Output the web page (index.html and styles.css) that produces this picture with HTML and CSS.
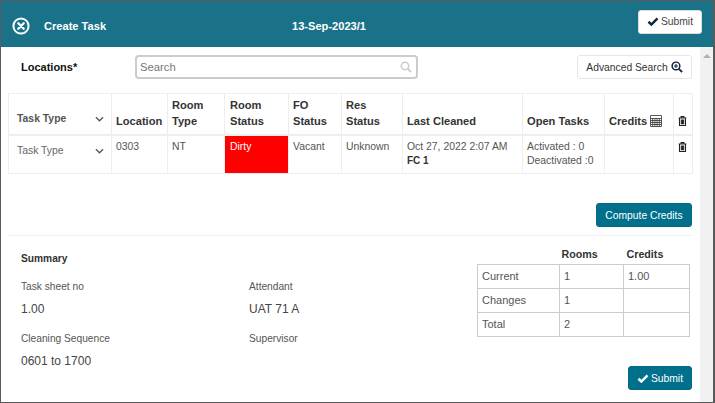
FILE: index.html
```html
<!DOCTYPE html>
<html lang="en">
<head>
<meta charset="utf-8">
<title>Create Task</title>
<link rel="stylesheet" href="styles.css">
</head>
<body>
<div class="window">
  <header class="topbar">
    <div class="title-group">
      <svg class="close-icon" viewBox="0 0 18 18" width="18" height="18"><circle cx="9" cy="9" r="7.6" fill="none" stroke="#fff" stroke-width="2"/><path d="M6.3 6.3l5.4 5.4M11.7 6.3l-5.4 5.4" stroke="#fff" stroke-width="2.3" stroke-linecap="round"/></svg>
      <span class="title">Create Task</span>
    </div>
    <div class="date">13-Sep-2023/1</div>
    <button class="btn btn-light"><svg class="check" viewBox="0 0 14 11" width="12" height="9"><path d="M1.5 5.8l3.5 3.4 7.5-7.6" fill="none" stroke="#0f2440" stroke-width="3"/></svg>Submit</button>
  </header>
  <div class="body">
    <main class="content">
      <div class="search-row">
        <div class="loc-label">Locations*</div>
        <div class="search-box">
          <span class="placeholder">Search</span>
          <svg viewBox="0 0 14 14" width="12" height="12"><circle cx="5.8" cy="5.8" r="4.3" fill="none" stroke="#ccc" stroke-width="1.8"/><path d="M9 9l4 4" stroke="#ccc" stroke-width="2.2"/></svg>
        </div>
        <button class="btn btn-outline">Advanced Search<svg viewBox="0 0 14 14" width="12" height="12"><circle cx="5.8" cy="5.8" r="4.5" fill="none" stroke="#0f2440" stroke-width="1.7"/><path d="M9.2 9.2l3.8 3.8" stroke="#0f2440" stroke-width="2.2"/><path d="M3.5 5.8h4.6M5.8 3.5v4.6" stroke="#0f2440" stroke-width="1.3"/></svg></button>
      </div>
      <table class="tasks">
        <colgroup>
          <col class="c1"><col class="c2"><col class="c3"><col class="c4"><col class="c5"><col class="c6"><col class="c7"><col class="c8"><col class="c9"><col class="c10">
        </colgroup>
        <thead>
          <tr>
            <th class="select-cell"><div class="select head-select"><span>Task Type</span><svg viewBox="0 0 10 6" width="9" height="6"><path d="M1 1l4 4 4-4" fill="none" stroke="#555" stroke-width="1.4"/></svg></div></th>
            <th>Location</th>
            <th>Room Type</th>
            <th class="status-col">Room Status</th>
            <th>FO Status</th>
            <th>Res Status</th>
            <th>Last Cleaned</th>
            <th>Open Tasks</th>
            <th class="nowrap">Credits <svg class="calc" viewBox="0 0 12 12" width="12" height="12"><path d="M.5.5h11v11H.5zM.5 3.5h11M.5 5.5h11M.5 7.5h11M.5 9.5h11M2.7 3.5v8M4.9 3.5v8M7.1 3.5v8M9.3 3.5v8" fill="none" stroke="#333" stroke-width=".8"/></svg></th>
            <th class="trash-cell"><svg class="trash" viewBox="0 0 10 12" width="9" height="10"><path d="M3.3 1.8V.7h3.4v1.1M.4 2.3h9.2M1.4 2.8v8.6h7.2V2.8M3.6 4.3v5.6M5 4.3v5.6M6.4 4.3v5.6" fill="none" stroke="#222" stroke-width="1.3"/></svg></th>
          </tr>
        </thead>
        <tbody>
          <tr>
            <td class="select-cell"><div class="select"><span>Task Type</span><svg viewBox="0 0 10 6" width="9" height="6"><path d="M1 1l4 4 4-4" fill="none" stroke="#555" stroke-width="1.4"/></svg></div></td>
            <td>0303</td>
            <td>NT</td>
            <td class="status-col dirty">Dirty</td>
            <td>Vacant</td>
            <td>Unknown</td>
            <td>Oct 27, 2022 2:07 AM<br><b>FC 1</b></td>
            <td>Activated : 0<br>Deactivated :0</td>
            <td></td>
            <td class="trash-cell"><svg class="trash" viewBox="0 0 10 12" width="9" height="10"><path d="M3.3 1.8V.7h3.4v1.1M.4 2.3h9.2M1.4 2.8v8.6h7.2V2.8M3.6 4.3v5.6M5 4.3v5.6M6.4 4.3v5.6" fill="none" stroke="#222" stroke-width="1.3"/></svg></td>
          </tr>
        </tbody>
      </table>
      <div class="compute-row"><button class="btn btn-primary">Compute Credits</button></div>
      <section class="summary">
        <div class="summary-left">
          <h2>Summary</h2>
          <div class="fields">
            <div class="field"><label>Task sheet no</label><p>1.00</p></div>
            <div class="field"><label>Attendant</label><p>UAT 71 A</p></div>
            <div class="field"><label>Cleaning Sequence</label><p>0601 to 1700</p></div>
            <div class="field"><label>Supervisor</label></div>
          </div>
        </div>
        <div class="summary-right">
          <table class="totals">
            <thead><tr><th></th><th>Rooms</th><th>Credits</th></tr></thead>
            <tbody>
              <tr><td>Current</td><td>1</td><td>1.00</td></tr>
              <tr><td>Changes</td><td>1</td><td></td></tr>
              <tr><td>Total</td><td>2</td><td></td></tr>
            </tbody>
          </table>
        </div>
      </section>
      <div class="submit-row"><button class="btn btn-primary"><svg class="check" viewBox="0 0 14 11" width="12" height="9"><path d="M1.5 5.8l3.5 3.4 7.5-7.6" fill="none" stroke="#fff" stroke-width="3"/></svg>Submit</button></div>
    </main>
    <div class="scrollbar"><span class="arrow"></span></div>
  </div>
</div>
</body>
</html>
```
FILE: styles.css
```css
* { box-sizing: border-box; }
html, body { margin: 0; padding: 0; }
body { width: 715px; height: 403px; overflow: hidden; background: #fff; font-family: "Liberation Sans", Arial, sans-serif; font-size: 10.4px; color: #555; }
.window { width: 715px; height: 403px; border: 1px solid #5a5a5a; border-right-width: 2px; display: flex; flex-direction: column; overflow: hidden; }
.topbar { height: 46px; flex: none; background: #1a7289; color: #fff; display: flex; align-items: center; padding: 0 10px 0 11px; position: relative; }
.title-group { display: flex; align-items: center; gap: 14px; width: 280px; margin-top: 4px; }
.title { font-weight: bold; font-size: 11.1px; }
.date { font-weight: bold; font-size: 11.1px; width: 346px; margin-top: 4px; }
.close-icon { flex: none; }
.btn { font-family: inherit; font-size: 10.3px; border-radius: 3px; cursor: pointer; display: inline-flex; align-items: center; justify-content: center; padding: 0; }
.btn-light { width: 64px; height: 24px; background: #fff; color: #444; border: 1px solid #ddd; gap: 2px; margin-bottom: 5px; }
.btn-outline { width: 115px; height: 24px; background: #fff; color: #333; border: 1px solid #e6e6e6; gap: 3px; }
.btn-primary { background: #00708c; color: #fff; border: 1px solid #006a85; height: 24px; }
.body { flex: 1; display: flex; min-height: 0; }
.content { width: 699px; flex: none; padding: 0 8px 0 7px; }
.scrollbar { flex: 1; background: #f1f1f1; position: relative; padding-top: 7px; display: flex; justify-content: center; }
.arrow { width: 0; height: 0; border-left: 4px solid transparent; border-right: 4px solid transparent; border-bottom: 4px solid #b0b0b0; }
.search-row { display: flex; align-items: center; height: 40px; margin-bottom: 6px; }
.loc-label { width: 127px; padding-left: 13px; font-weight: bold; color: #111; font-size: 11px; }
.search-box { width: 283px; height: 24px; border: 2px solid #ccc; border-radius: 4px; display: flex; align-items: center; justify-content: space-between; padding: 0 4px 0 3px; margin-right: 159px; }
.placeholder { color: #777; font-size: 11.3px; }
.tasks { border-collapse: collapse; table-layout: fixed; width: 684px; border: 1px solid #eee; }
.c1 { width: 103px; } .c2 { width: 56px; } .c3 { width: 57px; } .c4 { width: 64px; } .c5 { width: 53px; }
.c6 { width: 61px; } .c7 { width: 120px; } .c8 { width: 82px; } .c9 { width: 69px; } .c10 { width: 19px; }
.tasks th, .tasks td { border: 1px solid #eee; padding: 0 4px; text-align: left; font-size: 10.4px; line-height: 16px; }
.tasks th { height: 41px; vertical-align: bottom; padding-bottom: 5px; color: #333; font-weight: bold; font-size: 11.1px; }
.tasks thead tr { border-bottom: 2px solid #eee; }
.tasks td { height: 39px; vertical-align: top; padding-top: 4px; line-height: 14px; }
.tasks td b { color: #333; font-size: 10px; }
.tasks .status-col { padding-left: 5px; }
.tasks .dirty { background: #f00; color: #fff; }
.nowrap { white-space: nowrap; }
.calc { vertical-align: -2px; }
.trash { display: block; margin: 0 auto; }
.tasks .trash-cell { padding: 0 5px 0 3px; }
.tasks th.trash-cell { padding-bottom: 8px; }
.tasks td.trash-cell { padding-top: 6px; }
.tasks .select-cell { padding: 0 7px 0 8px; vertical-align: middle; }
.tasks th.select-cell { padding-top: 10px; }
.tasks td.select-cell { padding-bottom: 6px; }
.select { display: flex; align-items: center; justify-content: space-between; color: #666; font-size: 10.4px; font-weight: normal; }
.head-select { font-weight: bold; color: #555; font-size: 10.4px; }
.compute-row { display: flex; justify-content: flex-end; padding-top: 29px; height: 61px; }
.compute-row .btn { width: 96px; }
.summary { border-top: 1px solid #f0f0f0; display: flex; height: 131px; }
.summary-left { width: 469px; padding: 16px 0 0 13px; }
h2 { margin: 0; font-size: 10.2px; font-weight: bold; color: #333; line-height: 14px; }
.fields { display: grid; grid-template-columns: 228px 1fr; margin-top: 14px; row-gap: 17px; }
.field { height: 35px; }
.field label { display: block; font-size: 10.2px; line-height: 14px; color: #555; }
.field p { margin: 8px 0 0; font-size: 12px; line-height: 14px; color: #444; }
.summary-right { flex: 1; padding-top: 9px; }
.totals { border-collapse: collapse; table-layout: fixed; width: 213px; }
.totals th { height: 19px; text-align: left; padding: 0 3px; color: #333; font-size: 10.7px; vertical-align: middle; }
.totals th:nth-child(2) { padding-left: 2px; }
.totals td { height: 24px; border: 1px solid #ccc; padding: 0 4px 1px; font-size: 11px; color: #555; }
.totals th:nth-child(1), .totals td:nth-child(1) { width: 82px; }
.totals th:nth-child(2), .totals td:nth-child(2) { width: 64px; }
.submit-row { display: flex; justify-content: flex-end; }
.submit-row .btn { width: 64px; gap: 2px; }
```
